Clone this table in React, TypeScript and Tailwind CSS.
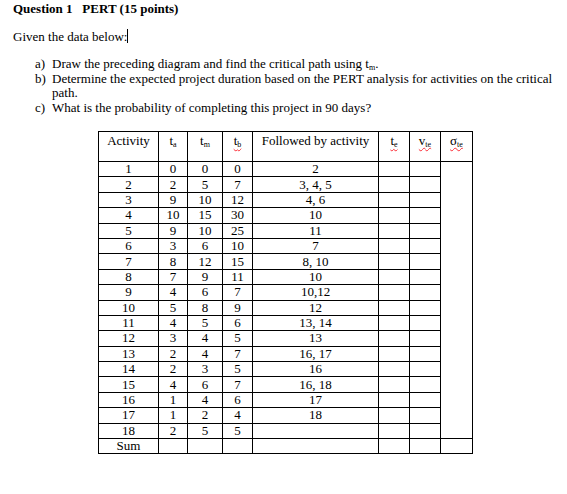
const rows: [string, string, string, string, string][] = [
  ["1", "0", "0", "0", "2"],
  ["2", "2", "5", "7", "3, 4, 5"],
  ["3", "9", "10", "12", "4, 6"],
  ["4", "10", "15", "30", "10"],
  ["5", "9", "10", "25", "11"],
  ["6", "3", "6", "10", "7"],
  ["7", "8", "12", "15", "8, 10"],
  ["8", "7", "9", "11", "10"],
  ["9", "4", "6", "7", "10,12"],
  ["10", "5", "8", "9", "12"],
  ["11", "4", "5", "6", "13, 14"],
  ["12", "3", "4", "5", "13"],
  ["13", "2", "4", "7", "16, 17"],
  ["14", "2", "3", "5", "16"],
  ["15", "4", "6", "7", "16, 18"],
  ["16", "1", "4", "6", "17"],
  ["17", "1", "2", "4", "18"],
  ["18", "2", "5", "5", ""],
];

const cell = "border border-black p-0 text-center leading-[14px] align-middle";
const head = "border border-black px-0 pt-[1px] text-center align-top font-normal leading-[15px]";
const squiggle = "underline decoration-wavy decoration-red-500 decoration-1 underline-offset-2";

const Label = ({ base, sub, spell }: { base: string; sub: string; spell?: boolean }) => (
  <span className={spell ? squiggle : ""}>
    {base}
    <sub className="text-[8px]">{sub}</sub>
  </span>
);

export default function App() {
  return (
    <div className="w-[567px] h-[494px] bg-white text-black text-[13px] font-['Liberation_Serif','Times_New_Roman',Times,serif]">
      <div className="pl-[13px] pt-[1px]">
        <p className="font-bold leading-[15px]">
          Question 1&nbsp;&nbsp; PERT (15 points)
        </p>
        <p className="mt-[13px] leading-[15px]">
          Given the data below:<span className="inline-block w-px h-[14px] bg-black align-[-2px]" />
        </p>
      </div>

      <ol className="mt-[13px] pl-[35px] pr-[12px] leading-[14.5px]">
        <li className="flex">
          <span className="w-[17px] shrink-0">a)</span>
          <span>
            Draw the preceding diagram and find the critical path using t<sub className="text-[8px]">m</sub>.
          </span>
        </li>
        <li className="flex">
          <span className="w-[17px] shrink-0">b)</span>
          <span>
            Determine the expected project duration based on the PERT analysis for activities on the critical path.
          </span>
        </li>
        <li className="flex">
          <span className="w-[17px] shrink-0">c)</span>
          <span>What is the probability of completing this project in 90 days?</span>
        </li>
      </ol>

      <table className="mt-[16px] ml-[98px] table-fixed border-collapse w-[374px]">
        <colgroup>
          <col className="w-[60px]" />
          <col className="w-[29px]" />
          <col className="w-[35px]" />
          <col className="w-[30px]" />
          <col className="w-[126px]" />
          <col className="w-[31px]" />
          <col className="w-[31px]" />
          <col className="w-[32px]" />
        </colgroup>
        <thead>
          <tr className="h-[30px]">
            <th className={head}>Activity</th>
            <th className={head}>
              <Label base="t" sub="a" />
            </th>
            <th className={head}>
              <Label base="t" sub="m" />
            </th>
            <th className={head}>
              <Label base="t" sub="b" spell />
            </th>
            <th className={head}>Followed by activity</th>
            <th className={head}>
              <Label base="t" sub="e" spell />
            </th>
            <th className={head}>
              <Label base="v" sub="te" spell />
            </th>
            <th className={head}>
              <Label base="σ" sub="te" spell />
            </th>
          </tr>
        </thead>
        <tbody>
          {rows.map((r, i) => (
            <tr key={r[0]} className="h-[15.4px]">
              <td className={cell}>{r[0]}</td>
              <td className={cell}>{r[1]}</td>
              <td className={cell}>{r[2]}</td>
              <td className={cell}>{r[3]}</td>
              <td className={cell}>{r[4]}</td>
              <td className={cell}></td>
              <td className={cell}></td>
              {i === 0 && <td rowSpan={18} className={cell}></td>}
            </tr>
          ))}
          <tr className="h-[15.4px]">
            <td className={cell}>Sum</td>
            <td className={cell}></td>
            <td className={cell}></td>
            <td className={cell}></td>
            <td className={cell}></td>
            <td className={cell}></td>
            <td className={cell}></td>
            <td className={cell}></td>
          </tr>
        </tbody>
      </table>
    </div>
  );
}
